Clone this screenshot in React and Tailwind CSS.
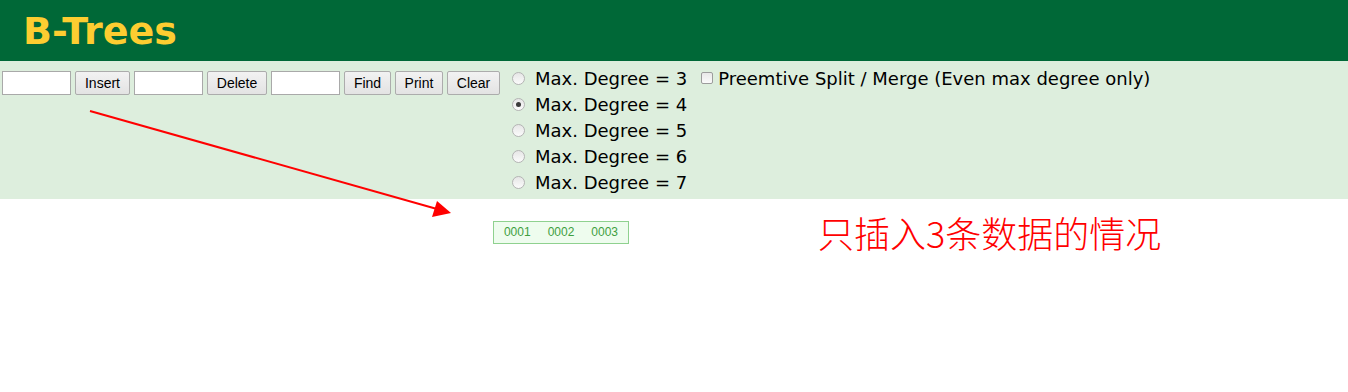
import React from 'react';

const degrees = [3, 4, 5, 6, 7];

function Radio({ checked }) {
    return (
        <span className="w-[13px] h-[13px] rounded-full border border-[#b4b4b4] bg-gradient-to-b from-[#e6e6e6] to-[#fbfbfb] flex items-center justify-center shrink-0">
            {checked && <span className="w-[5px] h-[5px] rounded-full bg-[#3a3a3a]"></span>}
        </span>
    );
}

function Btn({ label, w }) {
    return (
        <button className={`${w} h-[24px] border border-[#acacac] rounded-[2px] bg-gradient-to-b from-[#f2f2f2] to-[#e3e3e3] text-[14px] text-black font-['Liberation_Sans',Arial,sans-serif] leading-none`}>
            {label}
        </button>
    );
}

function Field({ w }) {
    return <input type="text" className={`${w} h-[24px] bg-white border border-[#a9a9a9] outline-none`} />;
}

export default function App() {
    return (
        <div className="relative w-[1348px] h-[392px] bg-white overflow-hidden">
            <header className="h-[61px] bg-[#006837] flex items-center pl-[23px]">
                <h1 className="text-[38px] font-bold text-[#fdcd31] font-['DejaVu_Sans',Verdana,sans-serif] leading-none">B-Trees</h1>
            </header>

            <section className="h-[138px] bg-[#ddeedd] flex items-start pl-[2px] pt-[4px]">
                <div className="flex items-center mt-[6px] gap-[4px]">
                    <Field w="w-[69px]" />
                    <Btn label="Insert" w="w-[55px]" />
                    <Field w="w-[69px]" />
                    <Btn label="Delete" w="w-[60px]" />
                    <Field w="w-[69px]" />
                    <Btn label="Find" w="w-[47px]" />
                    <Btn label="Print" w="w-[48px]" />
                    <Btn label="Clear" w="w-[53px]" />
                </div>

                <div className="flex flex-col ml-[12px] font-['DejaVu_Sans',Tahoma,sans-serif] text-[18px] text-black">
                    {degrees.map((d) => (
                        <label key={d} className="h-[26px] flex items-center gap-[10px]">
                            <Radio checked={d === 4} />
                            <span>Max. Degree = {d}</span>
                        </label>
                    ))}
                </div>

                <label className="h-[26px] flex items-center ml-[14px] gap-[5px] font-['DejaVu_Sans',Tahoma,sans-serif] text-[18px] text-black">
                    <span className="w-[12px] h-[12px] border border-[#9c9c9c] rounded-[2px] bg-gradient-to-b from-[#e8e8e8] to-[#fafafa]"></span>
                    <span>Preemtive Split / Merge (Even max degree only)</span>
                </label>
            </section>

            <div className="flex items-center pl-[493px] pt-[15px]">
                <div className="w-[136px] h-[23px] border border-[#8fd18f] bg-[#eefcee] flex items-center justify-center gap-[17px] text-[12px] text-[#3f9f3f] font-['Liberation_Sans',Arial,sans-serif]">
                    <span>0001</span>
                    <span>0002</span>
                    <span>0003</span>
                </div>
                <p className="ml-[189px] text-[36px] leading-none text-[#ff0000] font-['Noto_Sans_CJK_SC',sans-serif] font-light">只插入3条数据的情况</p>
            </div>

            {/* annotation arrow */}
            <svg className="absolute top-0 left-0 pointer-events-none" width="1348" height="392">
                <line x1="90" y1="111" x2="437" y2="209" stroke="#ff0000" strokeWidth="2" />
                <polygon points="451,213 437,201 432,217" fill="#ff0000" />
            </svg>
        </div>
    );
}
